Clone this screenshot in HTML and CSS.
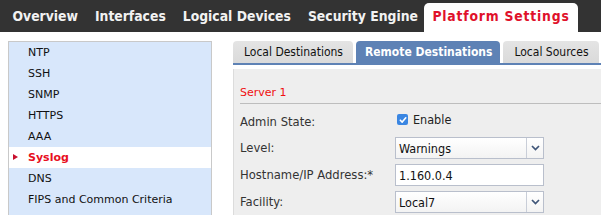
FILE: index.html
```html
<!DOCTYPE html>
<html>
<head>
<meta charset="utf-8">
<link rel="stylesheet" href="styles.css">
</head>
<body>
<header class="topnav">
  <a class="nav-item">Overview</a>
  <a class="nav-item">Interfaces</a>
  <a class="nav-item">Logical Devices</a>
  <a class="nav-item">Security Engine</a>
  <a class="nav-item active">Platform Settings</a>
</header>
<div class="main">
  <ul class="sidebar">
    <li>NTP</li>
    <li>SSH</li>
    <li>SNMP</li>
    <li>HTTPS</li>
    <li>AAA</li>
    <li class="selected"><span class="arrow"></span>Syslog</li>
    <li>DNS</li>
    <li>FIPS and Common Criteria</li>
  </ul>
  <section class="content">
    <div class="tabs">
      <div class="tab">Local Destinations</div>
      <div class="tab active">Remote Destinations</div>
      <div class="tab">Local Sources</div>
    </div>
    <div class="panel">
      <div class="server-title">Server 1</div>
      <div class="form">
        <label class="lbl">Admin State:</label>
        <div class="check-wrap">
          <span class="checkbox"><svg width="10" height="10" viewBox="0 0 10 10"><path d="M2.3 5.2 L4.2 7.1 L7.8 2.8" fill="none" stroke="#fff" stroke-width="1.6" stroke-linecap="round" stroke-linejoin="round"/></svg></span>
          <span class="enable">Enable</span>
        </div>
        <label class="lbl">Level:</label>
        <div class="select"><span class="val">Warnings</span><span class="drop"><svg width="9" height="6" viewBox="0 0 9 6"><path d="M1 1 L4.5 4.5 L8 1" fill="none" stroke="#3f5578" stroke-width="1.7"/></svg></span></div>
        <label class="lbl">Hostname/IP Address:*</label>
        <div class="input"><span class="val">1.160.0.4</span></div>
        <label class="lbl">Facility:</label>
        <div class="select"><span class="val">Local7</span><span class="drop"><svg width="9" height="6" viewBox="0 0 9 6"><path d="M1 1 L4.5 4.5 L8 1" fill="none" stroke="#3f5578" stroke-width="1.7"/></svg></span></div>
      </div>
    </div>
  </section>
</div>
</body>
</html>
```
FILE: styles.css
```css
* { box-sizing: border-box; }
html, body { margin: 0; padding: 0; background: #fff; overflow: hidden; }
body { width: 601px; height: 215px; font-family: "DejaVu Sans", Verdana, sans-serif; white-space: nowrap; }

.topnav {
  height: 32px;
  background: #333333;
  display: flex;
  align-items: flex-end;
  padding-left: 4px;
}
.nav-item {
  font-family: "DejaVu Sans Condensed", "DejaVu Sans", sans-serif;
  font-weight: bold;
  font-size: 13.8px;
  color: #f2f2f2;
  height: 29px;
  line-height: 27px;
  padding: 0 8.5px;
}
.nav-item.active {
  background: #fff;
  color: #e0112b;
  border-radius: 5px 5px 0 0;
  letter-spacing: 0.8px;
  padding: 0 8px 0 8px;
  margin-left: -2px;
}

.main { display: flex; padding-top: 9px; }
.sidebar {
  list-style: none;
  margin: 0 0 0 8px;
  padding: 0;
  width: 204px;
  flex-shrink: 0;
  height: 174px;
  background: #d8e7fb;
  border: 1px solid #c9c9c9;
  border-bottom: none;
}
.sidebar li {
  height: 21px;
  line-height: 21px;
  font-size: 11px;
  color: #111;
  padding-left: 19px;
  position: relative;
}
.sidebar li.selected {
  background: #fff;
  color: #e8101e;
  font-weight: bold;
}
.arrow {
  position: absolute;
  left: 4px;
  top: 7px;
  width: 0; height: 0;
  border-left: 5px solid #c8102e;
  border-top: 3.5px solid transparent;
  border-bottom: 3.5px solid transparent;
}

.content { flex: 1; min-width: 0; margin-left: 21px; }
.tabs {
  display: flex;
  gap: 3px;
  height: 24px;
  border-bottom: 2px solid #5e82b5;
}
.tab {
  height: 22px;
  line-height: 22px;
  padding: 0 10px 0 11px;
  font-family: "DejaVu Sans Condensed", "DejaVu Sans", sans-serif;
  font-size: 12px;
  color: #111;
  background: linear-gradient(#e4e4e4, #dadada);
  border-radius: 4px 4px 0 0;
}
.tab.active {
  background: #5e82b5;
  color: #fff;
  font-weight: bold;
  padding: 0 8px 0 9px;
}

.panel {
  margin-top: 4px;
  height: 146px;
  background: #eeeeee;
  border-left: 1px solid #dcdcdc;
  padding-left: 6px;
}
.server-title {
  font-size: 11px;
  color: #f01010;
  padding-top: 17px;
  height: 35px;
  border-bottom: 1px solid #bdbdbd;
}
.form {
  display: grid;
  grid-template-columns: 155px 149px;
  grid-auto-rows: 22px;
  row-gap: 5px;
  padding-top: 6px;
  align-items: center;
}
.lbl { font-size: 11.6px; color: #333; line-height: 22px; }
.form .lbl:first-child { position: relative; top: 1px; }
.check-wrap { display: flex; align-items: center; gap: 5px; padding-left: 2px; align-self: start; margin-top: 2px; }
.checkbox {
  width: 11px; height: 11px;
  border-radius: 2px;
  background: #3a86e2;
  display: flex; align-items: center; justify-content: center;
}
.enable {
  font-family: "DejaVu Sans Condensed", "DejaVu Sans", sans-serif;
  font-size: 12.5px; color: #222;
}
.select, .input {
  height: 22px;
  border: 1px solid #b9bfcc;
  background: linear-gradient(#ffffff, #f3f3f3);
  display: flex;
  align-items: center;
}
.input { background: #fff; }
.val {
  flex: 1;
  padding-left: 3px;
  font-family: "DejaVu Sans Condensed", "DejaVu Sans", sans-serif;
  font-size: 12.5px;
  color: #111;
}
.drop {
  width: 17px; height: 100%;
  border-left: 1px solid #c9ced8;
  display: flex; align-items: center; justify-content: center;
}
```
